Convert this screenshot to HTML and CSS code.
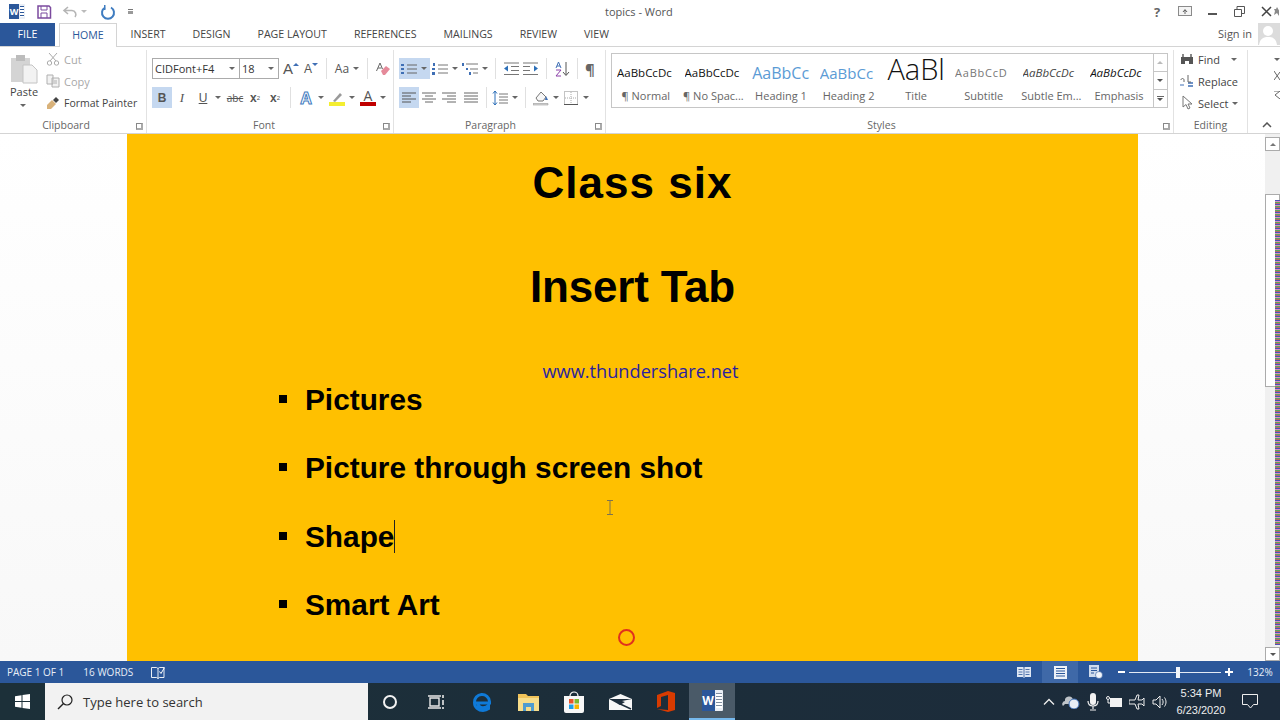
FILE: index.html

```html
<!DOCTYPE html>
<html lang="en">
<head>
    <meta charset="UTF-8">
    <title>topics - Word</title>
    <link rel="stylesheet" href="styles.css">
</head>
<body>
    <div class="app">
        <!-- title bar -->
        <div class="titlebar">
            <div class="qat">
                <span class="word-logo"><b>W</b><i></i></span>
                <svg class="qat-save" width="16" height="16" viewBox="0 0 16 16"><path d="M2 2h11l1.500 1.500V14H2z" fill="none" stroke="#7b4a9e" stroke-width="1.500"/><path d="M5 2v4h6V2M5 14V9h6v5" fill="none" stroke="#7b4a9e"/></svg>
                <svg class="qat-undo" width="16" height="14" viewBox="0 0 16 14"><path d="M6 2 2 5.500 6 9M2 5.500h8a4 4 0 0 1 3 6.500" fill="none" stroke="#b5b5b5" stroke-width="1.600"/></svg>
                <span class="caret caret-pale qat-caret"></span>
                <svg class="qat-redo" width="16" height="16" viewBox="0 0 16 16"><path d="M5 3.500a6 6 0 1 0 6 0" fill="none" stroke="#3f7cc0" stroke-width="2"/><path d="M4 1v5h1.500V1z" fill="#3f7cc0"/></svg>
                <span class="qat-custom"></span>
            </div>
            <div class="doc-title">topics - Word</div>
            <div class="win-btns">
                <span class="help">?</span>
                <svg class="win-opt" width="14" height="11" viewBox="0 0 14 11"><rect x=".5" y=".5" width="13" height="9" fill="#f4f4f4" stroke="#8a8a8a"/><path d="M7 3 4.500 6h5zM6.500 5h1v3h-1z" fill="#666"/></svg>
                <span class="win-min"></span>
                <svg class="win-max" width="11" height="11" viewBox="0 0 11 11"><path d="M.5 3.500h7v7h-7zM3 3.500V.5h7.500v7h-3" fill="none" stroke="#555"/></svg>
                <svg class="win-close" width="11" height="11" viewBox="0 0 11 11"><path d="M1 1l9 9M10 1l-9 9" stroke="#444" stroke-width="1.500"/></svg>
                <svg class="win-pin" width="5" height="9" viewBox="0 0 5 9"><path d="M3 0l2 3.500V9L3 6 0 8l1-4-1-2h2z" fill="#8a8a8a"/></svg>
            </div>
        </div>

        <!-- tabs -->
        <div class="tabs">
            <div class="tab tab-file">FILE</div>
            <div class="tab tab-active">HOME</div>
            <div class="tab">INSERT</div>
            <div class="tab">DESIGN</div>
            <div class="tab">PAGE LAYOUT</div>
            <div class="tab">REFERENCES</div>
            <div class="tab">MAILINGS</div>
            <div class="tab">REVIEW</div>
            <div class="tab">VIEW</div>
            <div class="signin">
                <span>Sign in</span>
                <svg width="22" height="22" viewBox="0 0 22 22"><rect width="22" height="22" fill="#dcdcdc"/><circle cx="10" cy="8" r="5" fill="#fff"/><path d="M1 22c1-7 5-8 9-8s8 1 9 8z" fill="#fff"/></svg>
            </div>
        </div>

        <!-- ribbon -->
        <div class="ribbon">
            <div class="group group-clipboard">
                <div class="group-body clipboard">
                    <div class="paste">
                        <svg width="28" height="30" viewBox="0 0 28 30"><rect x="1" y="4" width="19" height="24" fill="#d4d4d4"/><rect x="6" y="1" width="9" height="6" fill="#bcbcbc"/><path d="M13 11h9l5 5v13H13z" fill="#f2f2f2" stroke="#c4c4c4"/></svg>
                        <span>Paste</span>
                        <span class="caret"></span>
                    </div>
                    <div class="clip-list">
                        <div class="clip-row off">
                            <svg width="14" height="14" viewBox="0 0 14 14"><path d="M3 1l7 8M11 1L4 9" stroke="#aaa" fill="none"/><circle cx="3.500" cy="11" r="2.200" fill="none" stroke="#aaa"/><circle cx="10.500" cy="11" r="2.200" fill="none" stroke="#aaa"/></svg>
                            Cut
                        </div>
                        <div class="clip-row off">
                            <svg width="14" height="14" viewBox="0 0 14 14"><path d="M1 1h6v9H1zM6 4h7v9H6z" fill="#f2f2f2" stroke="#b0b0b0"/><path d="M8 7h3M8 9h3" stroke="#b0b0b0"/></svg>
                            Copy
                        </div>
                        <div class="clip-row painter">
                            <svg width="14" height="14" viewBox="0 0 14 14"><path d="M1 9l5-5 4 4-5 5H1z" fill="#d9b27a"/><path d="M7 4l3-3 3 3-3 3z" fill="#444"/></svg>
                            Format Painter
                        </div>
                    </div>
                </div>
                <div class="group-label">Clipboard<span class="launcher"></span></div>
            </div>

            <div class="group group-font">
                <div class="group-body rows">
                    <div class="row">
                        <div class="combo combo-font">CIDFont+F4<span class="caret"></span></div>
                        <div class="combo combo-size">18<span class="caret"></span></div>
                        <span class="tool gl-a">A<sup class="up"></sup></span>
                        <span class="tool gl-a small">A<sup class="down"></sup></span>
                        <span class="sep"></span>
                        <span class="tool tool-wide gl-aa">Aa<span class="caret"></span></span>
                        <span class="sep"></span>
                        <span class="tool">
                            <svg width="16" height="16" viewBox="0 0 16 16"><path d="M5 2 1.500 10M5 2l2.500 6M3 7h3.500" fill="none" stroke="#666"/><path d="M6 10l5-5 4 3-5 6H8z" fill="#e58a9a"/></svg>
                        </span>
                    </div>
                    <div class="row">
                        <span class="tool active gl-b">B</span>
                        <span class="tool gl-i">I</span>
                        <span class="tool gl-u">U</span><span class="caret caret-tight"></span>
                        <span class="tool gl-abc">abc</span>
                        <span class="tool gl-b">x<sub>2</sub></span>
                        <span class="tool gl-b">x<sup>2</sup></span>
                        <span class="sep"></span>
                        <span class="tool gl-effect">A</span><span class="caret caret-tight"></span>
                        <span class="tool tool-mark">
                            <svg width="16" height="16" viewBox="0 0 16 16"><path d="M4 11l7-8 2 2-7 7z" fill="#9a9a9a"/><rect x="0" y="12" width="16" height="4" fill="#f4ee30"/></svg>
                        </span><span class="caret caret-tight"></span>
                        <span class="tool gl-color">A</span><span class="caret caret-tight"></span>
                    </div>
                </div>
                <div class="group-label">Font<span class="launcher"></span></div>
            </div>

            <div class="group group-para">
                <div class="group-body rows">
                    <div class="row">
                        <span class="tool-split active">
                            <svg width="16" height="14" viewBox="0 0 16 14"><path d="M0 2h3v2H0zM0 6h3v2H0zM0 10h3v2H0z" fill="#3f6fb5"/><path d="M6 3h10M6 7h10M6 11h10" stroke="#666"/></svg>
                            <span class="caret"></span>
                        </span>
                        <span class="tool">
                            <svg width="16" height="14" viewBox="0 0 16 14"><path d="M1 1h2v3H1zM0 6h3v2H0zM0 10h3v3H0z" fill="#3f6fb5"/><path d="M6 3h10M6 7h10M6 11h10" stroke="#777"/></svg>
                        </span><span class="caret caret-tight"></span>
                        <span class="tool">
                            <svg width="16" height="14" viewBox="0 0 16 14"><path d="M0 1h2v3H0zM4 6h2v2H4zM7 10h2v3H7z" fill="#3f6fb5"/><path d="M4 2h12M8 7h8M11 11h5" stroke="#777"/></svg>
                        </span><span class="caret caret-tight"></span>
                        <span class="sep"></span>
                        <span class="tool">
                            <svg width="16" height="14" viewBox="0 0 16 14"><path d="M1 1h15M8 4.500h8M8 8.500h8M1 12.500h15" stroke="#777"/><path d="M1 6.500 5 3.500v6z" fill="#2c6fb8"/></svg>
                        </span>
                        <span class="tool">
                            <svg width="16" height="14" viewBox="0 0 16 14"><path d="M0 1h15M0 4.500h7M0 8.500h7M0 12.500h15" stroke="#777"/><path d="M15 6.500 11 3.500v6z" fill="#2c6fb8"/></svg>
                        </span>
                        <span class="sep"></span>
                        <span class="tool tool-az">
                            <svg width="16" height="16" viewBox="0 0 16 16"><path d="M12 1v13M9 11l3 3.500 3-3.500" fill="none" stroke="#555"/><path d="M2 7l2.500-6L7 7M3 5h3" fill="none" stroke="#3f6fb5"/><path d="M2 9h5l-5 6h5" fill="none" stroke="#8b3fa8"/></svg>
                        </span>
                        <span class="sep"></span>
                        <span class="tool gl-pilcrow">¶</span>
                    </div>
                    <div class="row">
                        <span class="tool active">
                            <svg width="14" height="12" viewBox="0 0 14 12"><path d="M0 1h14M0 4h9M0 7h14M0 10h9" stroke="#555"/></svg>
                        </span>
                        <span class="tool">
                            <svg width="14" height="12" viewBox="0 0 14 12"><path d="M0 1h14M3 4h8M0 7h14M3 10h8" stroke="#666"/></svg>
                        </span>
                        <span class="tool">
                            <svg width="14" height="12" viewBox="0 0 14 12"><path d="M0 1h14M5 4h9M0 7h14M5 10h9" stroke="#666"/></svg>
                        </span>
                        <span class="tool tool-justify">
                            <svg width="14" height="12" viewBox="0 0 14 12"><path d="M0 1h14M0 4h14M0 7h14M0 10h14" stroke="#666"/></svg>
                        </span>
                        <span class="sep"></span>
                        <span class="tool tool-spacing">
                            <svg width="16" height="16" viewBox="0 0 16 16"><path d="M3 1v14M1 3.500 3 1l2 2.500M1 12.500 3 15l2-2.500" fill="none" stroke="#2c6fb8"/><path d="M7 4h9M7 7h9M7 10h9M7 13h9" stroke="#777"/></svg>
                        </span><span class="caret caret-tight"></span>
                        <span class="sep"></span>
                        <span class="tool">
                            <svg width="16" height="16" viewBox="0 0 16 16"><path d="M3 8l5-6 5 5-3 4H5z" fill="#f7f7f7" stroke="#777"/><path d="M13 6l2 4h-3z" fill="#3f6fb5"/><path d="M0 13.500h15V15H0z" fill="#d9d9d9" stroke="#888" stroke-width=".5"/></svg>
                        </span><span class="caret caret-tight"></span>
                        <span class="tool">
                            <svg width="14" height="14" viewBox="0 0 14 14"><rect x=".5" y=".5" width="13" height="13" fill="none" stroke="#888" stroke-dasharray="1 1"/><path d="M7 1v12M1 7h12" stroke="#aaa" stroke-dasharray="1 1"/><path d="M0 13.500h14" stroke="#555"/></svg>
                        </span><span class="caret caret-tight"></span>
                    </div>
                </div>
                <div class="group-label">Paragraph<span class="launcher"></span></div>
            </div>

            <div class="group group-styles">
                <div class="gallery">
                    <div class="style"><div class="preview">AaBbCcDc</div><div class="style-name">¶ Normal</div></div>
                    <div class="style"><div class="preview">AaBbCcDc</div><div class="style-name">¶ No Spac...</div></div>
                    <div class="style"><div class="preview pv-h1">AaBbCc</div><div class="style-name">Heading 1</div></div>
                    <div class="style"><div class="preview pv-h2">AaBbCc</div><div class="style-name">Heading 2</div></div>
                    <div class="style"><div class="preview pv-title">AaBl</div><div class="style-name">Title</div></div>
                    <div class="style"><div class="preview pv-sub">AaBbCcD</div><div class="style-name">Subtitle</div></div>
                    <div class="style"><div class="preview pv-em pv-subtle">AaBbCcDc</div><div class="style-name">Subtle Em...</div></div>
                    <div class="style"><div class="preview pv-em">AaBbCcDc</div><div class="style-name">Emphasis</div></div>
                    <div class="gallery-scroll">
                        <span><i class="tri-up"></i></span>
                        <span><i class="tri-down"></i></span>
                        <span class="more"><i class="tri-down"></i></span>
                    </div>
                </div>
                <div class="group-label">Styles<span class="launcher"></span></div>
            </div>

            <div class="group group-edit">
                <div class="group-body edit-list">
                    <div class="edit-row">
                        <svg width="14" height="14" viewBox="0 0 14 14"><path d="M1 5h4v7H1zM9 5h4v7H9zM5 5h4v4H5z" fill="#555"/><path d="M2 2h2v3H2zM10 2h2v3h-2z" fill="#888"/></svg>
                        Find<span class="caret caret-find"></span>
                    </div>
                    <div class="edit-row">
                        <svg width="14" height="14" viewBox="0 0 14 14"><path d="M0 11h4" stroke="#3f6fb5"/><path d="M8 9h5M8 12h5" stroke="#3f6fb5" stroke-width="1.500"/><path d="M1 6c0-2 3-2 3 0v2M8 1v7h3" fill="none" stroke="#666"/></svg>
                        Replace
                    </div>
                    <div class="edit-row">
                        <svg width="14" height="16" viewBox="0 0 14 16"><path d="M3 1v11l3-2.500 2 4.500 2-1-2-4h4z" fill="#fff" stroke="#777"/></svg>
                        Select<span class="caret"></span>
                    </div>
                </div>
                <div class="group-label">Editing</div>
            </div>

            <div class="group group-extra">
                <div class="extra-bits">
                    <span class="caret"></span>
                    <svg width="6" height="12" viewBox="0 0 6 12"><path d="M0 1l6 9M0 10l6-8" stroke="#666" fill="none"/></svg>
                    <svg width="6" height="8" viewBox="0 0 6 8"><path d="M0 0h6L1 4l5 4" stroke="#666" fill="none"/></svg>
                </div>
                <svg class="collapse" width="10" height="6" viewBox="0 0 10 6"><path d="M1 5l4-4 4 4" fill="none" stroke="#555" stroke-width="1.500"/></svg>
            </div>
        </div>

        <!-- document area -->
        <div class="workspace">
            <div class="gutter"></div>
            <div class="page">
                <h1 class="spaced">Class six</h1>
                <h1 class="tight">Insert Tab</h1>
                <div class="url">www.thundershare.net</div>
                <ul class="topics">
                    <li>Pictures</li>
                    <li>Picture through screen shot</li>
                    <li><span class="typing">Shape</span></li>
                    <li>Smart Art</li>
                </ul>
                <svg class="ibeam" width="8" height="15" viewBox="0 0 8 15"><path d="M1 .5h6M1 14.500h6M4 1v13" stroke="#7d7350" fill="none"/></svg>
                <span class="click-ring"></span>
            </div>
            <div class="gutter gutter-right"></div>
            <div class="vscroll">
                <span class="vs-btn"><i class="tri-up"></i></span>
                <div class="vs-track"><div class="vs-thumb"></div></div>
                <span class="vs-btn"><i class="tri-down"></i></span>
                <div class="vs-noise"></div>
            </div>
        </div>

        <!-- status bar -->
        <div class="statusbar">
            <span class="st-text st-page">PAGE 1 OF 1</span>
            <span class="st-text st-words">16 WORDS</span>
            <svg class="st-proof" width="14" height="13" viewBox="0 0 14 13"><path d="M.5 1.500h5l1.500 1v10l-1.500-1h-5zM7 2.500l1.500-1H13v10H8.500l-1.500 1" fill="none" stroke="#fff" stroke-width=".9"/><path d="M8.500 5.500l1.500 2 3.500-6" fill="none" stroke="#fff"/></svg>
            <div class="st-right">
                <span class="view">
                    <svg width="14" height="12" viewBox="0 0 14 12"><path d="M0 1h6l1 1 1-1h6v10H8l-1 1-1-1H0z" fill="#dfe7f3"/><path d="M7 2v9M1.500 3.500h4M1.500 6h4M1.500 8.500h4M8.500 3.500h4M8.500 6h4M8.500 8.500h4" stroke="#2b579a" stroke-width=".8"/></svg>
                </span>
                <span class="view view-active">
                    <svg width="13" height="13" viewBox="0 0 13 13"><rect width="13" height="13" fill="#eef2f8"/><path d="M2 2.500h9M2 5h9M2 7.500h9M2 10h9" stroke="#2b579a"/></svg>
                </span>
                <span class="view">
                    <svg width="14" height="14" viewBox="0 0 14 14"><rect x="0" y="0" width="10" height="12" fill="#cfdbec"/><path d="M2 3h6M2 5.500h6M2 8h3" stroke="#2b579a"/><circle cx="10" cy="10" r="3.500" fill="#f2f5fa" stroke="#2b579a" stroke-width=".6"/></svg>
                </span>
                <div class="zoom">
                    <span class="zoom-minus"></span>
                    <div class="zoom-track"><span class="zoom-thumb"></span></div>
                    <span class="zoom-plus"></span>
                </div>
                <span class="st-text st-zoom">132%</span>
            </div>
        </div>

        <!-- taskbar -->
        <div class="taskbar">
            <div class="start">
                <svg width="15" height="15" viewBox="0 0 15 15"><path d="M0 2.200 6.500 1.200V7H0zM7.500 1l7.500-1v7H7.500zM0 8h6.500v5.800L0 12.800zM7.500 8H15v7l-7.500-1z" fill="#fff"/></svg>
            </div>
            <div class="search">
                <svg width="16" height="16" viewBox="0 0 16 16"><circle cx="10" cy="6" r="5" fill="none" stroke="#222" stroke-width="1.200"/><path d="M6.500 9.500 1 15" stroke="#222" stroke-width="1.400"/></svg>
                <span>Type here to search</span>
            </div>
            <div class="task-icons">
                <span class="task"><i class="cortana"></i></span>
                <span class="task">
                    <svg width="18" height="14" viewBox="0 0 18 14"><path d="M3 3h9v8H3zM1 1h13M1 13h13" fill="none" stroke="#e8e8e8" stroke-width="1.400"/><path d="M16 0v3M16 5v5M16 12v2" stroke="#e8e8e8" stroke-width="1.600"/></svg>
                </span>
                <span class="task">
                    <svg width="20" height="20" viewBox="0 0 20 20"><path d="M2.500 11h15V9.500a7.500 7.500 0 0 0-15 1c0 5 4 8 8.500 8 2 0 4-.6 5.500-1.800v-3c-1.500 1.300-3.500 2-5.500 2-2.500 0-4.500-1.200-5-3.700" fill="none" stroke="#0f7ad8" stroke-width="3"/></svg>
                </span>
                <span class="task">
                    <svg width="21" height="18" viewBox="0 0 21 18"><path d="M0 1h8l2 2h11v15H0z" fill="#f0c35a"/><path d="M0 5h21v13H0z" fill="#f7dd8a"/><path d="M5 10h11v8h-3v-4H8v4H5z" fill="#4f9ccf"/></svg>
                </span>
                <span class="task">
                    <svg width="22" height="23" viewBox="0 0 22 23"><path d="M7 6a4 4 0 0 1 8 0" fill="none" stroke="#fff" stroke-width="1.200"/><path d="M1 6h20v15a2 2 0 0 1-2 2H3a2 2 0 0 1-2-2z" fill="#f7f7f7"/><rect x="6" y="9" width="4.500" height="4.500" fill="#e8532b"/><rect x="11.500" y="9" width="4.500" height="4.500" fill="#7cb82f"/><rect x="6" y="14.500" width="4.500" height="4.500" fill="#1d9fe8"/><rect x="11.500" y="14.500" width="4.500" height="4.500" fill="#f7b500"/></svg>
                </span>
                <span class="task">
                    <svg width="23" height="16" viewBox="0 0 23 16"><path d="M0 5 11.500 0 23 5v11H0z" fill="#f7f7f7"/><path d="M0 5l11 6 5-3-3-1 10-2" fill="#1d2d3b"/><path d="M9 9l13 6" stroke="#1d2d3b" stroke-width="1.400"/></svg>
                </span>
                <span class="task">
                    <svg width="18" height="21" viewBox="0 0 18 21"><path d="M0 4 11 0l7 2v17l-7 2-11-3 11 1V4l-7 2v9l-4 2z" fill="#d83b01"/></svg>
                </span>
                <span class="task task-active"><span class="word-logo big"><b>W</b><i></i></span></span>
            </div>
            <div class="tray">
                <svg class="tray-chev" width="12" height="7" viewBox="0 0 12 7"><path d="M1 6.500l5-5 5 5" fill="none" stroke="#eee" stroke-width="1.300"/></svg>
                <svg width="18" height="14" viewBox="0 0 18 14"><path d="M1 11a3 3 0 0 1 2-5 4 4 0 0 1 8-1 3 3 0 0 1 3 4H3z" fill="#bfc4c9"/><circle cx="12" cy="9" r="5" fill="#e8eef5" stroke="#3f6fb5"/></svg>
                <svg width="12" height="18" viewBox="0 0 12 18"><rect x="3" y="0" width="6" height="12" rx="3" fill="#f2f2f2"/><path d="M1 8c0 4 2 5 5 5s5-1 5-5M6 13v3M3 17h6" fill="none" stroke="#f2f2f2" stroke-width="1.200"/></svg>
                <svg width="16" height="12" viewBox="0 0 16 12"><rect x="4" y="2" width="12" height="9" fill="#f2f2f2"/><circle cx="2" cy="2" r="1.500" fill="none" stroke="#f2f2f2"/><path d="M2 4v3h2" stroke="#f2f2f2" fill="none"/></svg>
                <svg width="16" height="16" viewBox="0 0 16 16"><path d="M0 6h6L8 1h2L9 6h4l2-2v8l-2-2H9l1 5H8L6 10H0z" fill="none" stroke="#eee"/></svg>
                <svg width="16" height="14" viewBox="0 0 16 14"><path d="M1 5h3l4-4v12L4 9H1z" fill="none" stroke="#eee"/><path d="M10 4c1.500 2 1.500 4 0 6M12.500 2.500c2 3 2 6 0 9" fill="none" stroke="#eee"/></svg>
                <div class="clock"><div>5:34 PM</div><div>6/23/2020</div></div>
                <svg class="notify" width="16" height="15" viewBox="0 0 16 15"><path d="M.5.500h15v10h-4l-3 3.500-3-3.500h-5z" fill="none" stroke="#eee"/></svg>
            </div>
        </div>
    </div>
</body>
</html>
```

FILE: styles.css

```css
* {
    margin: 0;
    padding: 0;
    box-sizing: border-box;
}

body {
    width: 1280px;
    height: 720px;
    overflow: hidden;
    font-family: 'Open Sans', 'Noto Sans', sans-serif;
    font-size: 11px;
    color: #444;
    background: #fff;
}

.app {
    height: 720px;
    display: flex;
    flex-direction: column;
}

svg {
    flex: none;
    display: block;
}

/* small dropdown arrow used everywhere */
.caret {
    display: inline-block;
    flex: none;
    width: 0;
    height: 0;
    border-left: 3px solid transparent;
    border-right: 3px solid transparent;
    border-top: 3px solid #666;
}

.caret-pale {
    border-top-color: #bbb;
}

.caret-tight {
    margin: 0 2px;
}

.word-logo {
    display: flex;
    align-items: center;
    width: 16px;
    height: 15px;
    background: #e9eef5;
    border-radius: 1px;
}

.word-logo b {
    width: 10px;
    height: 15px;
    background: #2b579a;
    color: #fff;
    font-size: 9px;
    line-height: 15px;
    text-align: center;
    font-weight: 700;
}

.word-logo i {
    flex: 1;
    height: 11px;
    margin: 0 1px;
    background: repeating-linear-gradient(#2b579a 0 1px, #fff 1px 3px);
}

.word-logo.big {
    width: 21px;
    height: 21px;
}

.word-logo.big b {
    width: 13px;
    height: 21px;
    font-size: 12px;
    line-height: 21px;
}

.word-logo.big i {
    height: 15px;
    background: repeating-linear-gradient(#7f8da0 0 1px, #fff 1px 3px);
}

/* title bar */
.titlebar {
    height: 23px;
    display: flex;
    align-items: center;
    flex: none;
}

.qat {
    width: 140px;
    height: 23px;
    padding-left: 9px;
    display: flex;
    align-items: center;
}

.qat-save {
    margin-left: 11px;
}

.qat-undo {
    margin-left: 10px;
}

.qat-caret {
    margin-left: 3px;
}

.qat-redo {
    margin-left: 13px;
}

.qat-custom {
    width: 5px;
    height: 5px;
    margin-left: 12px;
    border-top: 1px solid #777;
    border-bottom: 3px solid #999;
}

.doc-title {
    flex: 1;
    padding-left: 465px;
    font-size: 11px;
    color: #555;
}

.win-btns {
    width: 134px;
    display: flex;
    align-items: center;
    padding-left: 4px;
}

.help {
    width: 14px;
    font-weight: 700;
    font-size: 13px;
    color: #666;
    text-align: center;
}

.win-opt {
    margin-left: 14px;
}

.win-min {
    width: 9px;
    height: 2px;
    margin: 4px 0 0 16px;
    background: #555;
}

.win-max {
    margin-left: 17px;
}

.win-close {
    margin-left: 16px;
}

.win-pin {
    margin-left: 2px;
}

/* tabs */
.tabs {
    height: 24px;
    flex: none;
    display: flex;
    border-bottom: 1px solid #d4d4d4;
}

.tab {
    padding: 4px 13.500px 0;
    font-size: 10.600px;
    color: #444;
    white-space: nowrap;
}

.tab-file {
    width: 55px;
    margin-right: 4px;
    padding: 4px 0 0;
    text-align: center;
    background: #2b579a;
    color: #fff;
}

.tab-active {
    width: 58px;
    padding: 4px 0 0;
    margin-bottom: -1px;
    text-align: center;
    color: #2b579a;
    background: #fff;
    border: 1px solid #d4d4d4;
    border-bottom: none;
}

.signin {
    margin-left: auto;
    display: flex;
    align-items: flex-start;
    gap: 6px;
    font-size: 11px;
    color: #555;
}

.signin span {
    padding-top: 3px;
}

/* ribbon */
.ribbon {
    height: 87px;
    flex: none;
    display: flex;
    border-bottom: 1px solid #d4d4d4;
    padding-top: 3px;
}

.group {
    display: flex;
    flex-direction: column;
    border-right: 1px solid #e2e2e2;
    flex: none;
}

.group-body {
    flex: 1;
}

.group-label {
    height: 15px;
    font-size: 10.500px;
    line-height: 15px;
    color: #666;
    text-align: center;
    position: relative;
}

.launcher {
    position: absolute;
    right: 3px;
    top: 5px;
    width: 7px;
    height: 7px;
    border-left: 1px solid #888;
    border-top: 1px solid #888;
    border-bottom: 2px solid #aaa;
    border-right: 2px solid #aaa;
}

.group-clipboard {
    width: 147px;
}

.group-clipboard .group-label {
    padding-right: 14px;
}

.group-font {
    width: 247px;
}

.group-font .group-label {
    padding-right: 12px;
}

.group-para {
    width: 212px;
}

.group-para .group-label {
    padding-right: 18px;
}

.group-styles {
    width: 568px;
}

.group-styles .group-label {
    padding-right: 16px;
}

.group-edit {
    width: 74px;
}

.group-extra {
    flex: 1;
    border-right: none;
}

/* clipboard */
.clipboard {
    display: flex;
}

.paste {
    width: 46px;
    padding: 4px 0 0 10px;
    display: flex;
    flex-direction: column;
    font-size: 11px;
    color: #444;
}

.paste span:nth-child(2) {
    margin-top: 0;
}

.paste .caret {
    margin: 5px 0 0 10px;
}

.clip-list {
    margin-top: -1px;
    display: flex;
    flex-direction: column;
    gap: 2px;
}

.clip-row {
    height: 20px;
    display: flex;
    align-items: center;
    gap: 4px;
    font-size: 11px;
    color: #444;
}

.clip-row.off {
    color: #a8a8a8;
}

.clip-row.painter {
    font-size: 10.500px;
}

/* font + paragraph rows */
.rows {
    padding: 8px 0 0 5px;
    display: flex;
    flex-direction: column;
    gap: 8px;
}

.row {
    height: 21px;
    display: flex;
    align-items: center;
}

.combo {
    height: 21px;
    display: flex;
    align-items: center;
    justify-content: space-between;
    padding: 0 4px 0 2px;
    border: 1px solid #ababab;
    font-size: 11px;
    color: #333;
    background: #fff;
}

.combo-font {
    width: 88px;
}

.combo-size {
    width: 40px;
    margin-left: -1px;
    margin-right: 2px;
}

.tool {
    width: 20px;
    height: 21px;
    display: flex;
    align-items: center;
    justify-content: center;
    flex: none;
    color: #555;
    font-size: 12px;
}

.tool-wide {
    width: 30px;
    gap: 4px;
    font-size: 12px;
}

.tool-split {
    width: 31px;
    height: 21px;
    display: flex;
    align-items: center;
    gap: 4px;
    padding-left: 2px;
}

.active {
    background: #c5d8f0;
}

.sep {
    width: 1px;
    height: 21px;
    margin: 0 5px;
    flex: none;
    background: #e0e0e0;
}

.gl-a {
    font-size: 15px;
    font-family: 'Liberation Sans', sans-serif;
}

.gl-a.small {
    font-size: 12px;
}

.gl-a sup {
    width: 0;
    height: 0;
    margin-bottom: 8px;
    border-left: 3px solid transparent;
    border-right: 3px solid transparent;
}

.gl-a .up {
    border-bottom: 3px solid #3f6fb5;
}

.gl-a .down {
    border-top: 3px solid #3f6fb5;
}

.gl-b {
    font-family: 'Liberation Sans', sans-serif;
    font-weight: 700;
}

.gl-b sub, .gl-b sup {
    font-size: 6px;
    font-weight: 400;
}

.gl-i {
    font-family: 'Liberation Serif', serif;
    font-style: italic;
    font-size: 13px;
}

.gl-u {
    margin-left: 1px;
    font-family: 'Liberation Sans', sans-serif;
    text-decoration: underline;
}

.gl-abc {
    margin-left: 2px;
    font-size: 10px;
    text-decoration: line-through;
}

.gl-effect {
    font-size: 16px;
    font-weight: 700;
    color: #fff;
    -webkit-text-stroke: 1px #3f7cc0;
}

.tool-mark {
    margin-left: 1px;
}

.gl-color {
    width: 16px;
    height: 17px;
    margin: 0 2px 0 3px;
    font-size: 14px;
    line-height: 14px;
    border-bottom: 4px solid #c00000;
}

.gl-pilcrow {
    margin-left: -3px;
    font-size: 15px;
    font-weight: 700;
    color: #666;
}

.tool-justify {
    margin-left: 2px;
}

.tool-spacing {
    margin-left: -2px;
}

/* styles gallery */
.gallery {
    flex: 1;
    margin: 3px 5px 10px 5px;
    display: flex;
    border: 1px solid #c6c6c6;
    background: #fff;
}

.style {
    width: 67.600px;
    flex: none;
    overflow: hidden;
    text-align: center;
}

.preview {
    height: 36px;
    margin: 0 5px;
    padding-top: 2px;
    line-height: 34px;
    text-align: left;
    white-space: nowrap;
    overflow: hidden;
    font-size: 11.500px;
    color: #111;
}

.pv-h1 {
    font-size: 16px;
    color: #5b9bd5;
}

.pv-h2 {
    font-size: 15px;
    color: #5b9bd5;
}

.pv-title {
    padding-top: 0;
    font-size: 29px;
    font-weight: 300;
    line-height: 30px;
    color: #111;
}

.pv-sub {
    font-size: 11px;
    letter-spacing: .8px;
    color: #777;
}

.pv-em {
    font-style: italic;
}

.pv-subtle {
    color: #444;
}

.style-name {
    font-size: 11px;
    line-height: 12px;
    color: #666;
    white-space: nowrap;
}

.gallery-scroll {
    margin-left: auto;
    width: 15px;
    display: flex;
    flex-direction: column;
    border-left: 1px solid #c6c6c6;
}

.gallery-scroll span {
    flex: 1;
    display: flex;
    flex-direction: column;
    align-items: center;
    justify-content: center;
    border-bottom: 1px solid #c6c6c6;
}

.gallery-scroll span:last-child {
    border-bottom: none;
}

.gallery-scroll .more::before {
    content: '';
    width: 7px;
    height: 1px;
    margin-bottom: 1px;
    background: #666;
}

.tri-up, .tri-down {
    display: block;
    width: 0;
    height: 0;
    border-left: 3px solid transparent;
    border-right: 3px solid transparent;
}

.tri-up {
    border-bottom: 3px solid #777;
}

.tri-down {
    border-top: 3px solid #555;
}

.gallery-scroll .tri-up {
    border-bottom-color: #bbb;
}

/* editing */
.edit-list {
    margin-top: -1px;
    padding-left: 6px;
    display: flex;
    flex-direction: column;
    gap: 2px;
}

.edit-row {
    height: 20px;
    display: flex;
    align-items: center;
    gap: 4px;
    font-size: 11px;
    color: #444;
}

.caret-find {
    margin-left: 7px;
}

.extra-bits {
    flex: 1;
    width: 6px;
    align-self: flex-end;
    padding-top: 8px;
    display: flex;
    flex-direction: column;
    align-items: center;
    gap: 9px;
}

.collapse {
    margin: 0 0 5px 14px;
}

/* document */
.workspace {
    height: 527px;
    flex: none;
    display: flex;
    position: relative;
    overflow: hidden;
}

.gutter {
    width: 127px;
    flex: none;
    background: linear-gradient(#fff, #f8f8f8);
}

.page {
    width: 1011px;
    flex: none;
    position: relative;
    overflow: hidden;
    padding-top: 22px;
    background: #ffc000;
    color: #000;
    font-family: 'Liberation Sans', Arial, sans-serif;
}

.page h1 {
    height: 54px;
    margin-bottom: 50px;
    font-size: 44px;
    line-height: 54px;
    text-align: center;
    font-weight: 700;
}

.page h1.spaced {
    letter-spacing: 1px;
}

.page h1.tight {
    letter-spacing: -.2px;
}

.url {
    margin-top: -4px;
    padding-left: 16px;
    height: 22px;
    font-family: 'Open Sans', sans-serif;
    font-size: 18.200px;
    line-height: 22px;
    text-align: center;
    color: #2a1fa0;
}

.topics {
    margin-top: 1px;
    padding-left: 178px;
    list-style: none;
}

.topics li {
    position: relative;
    height: 34px;
    margin-bottom: 34.400px;
    font-size: 29.800px;
    line-height: 34px;
    font-weight: 700;
}

.topics li::before {
    content: '';
    position: absolute;
    left: -26px;
    top: 12px;
    width: 8px;
    height: 8px;
    background: #000;
}

.typing {
    border-right: 1px solid #222;
}

.ibeam {
    position: absolute;
    left: 479px;
    top: 366px;
}

.click-ring {
    position: absolute;
    left: 491px;
    top: 495px;
    width: 17px;
    height: 17px;
    border: 2px solid #e0301e;
    border-radius: 50%;
}

.vscroll {
    flex: 1;
    display: flex;
    flex-direction: column;
    padding-top: 3px;
    background: #f0f0f0;
    position: relative;
}

.vs-btn {
    height: 14px;
    flex: none;
    display: flex;
    align-items: center;
    justify-content: center;
    background: #fff;
    border: 1px solid #ababab;
}

.vs-track {
    flex: 1;
    padding-top: 43px;
}

.vs-thumb {
    height: 193px;
    background: #fff;
    border: 1px solid #ababab;
}

.vs-noise {
    position: absolute;
    right: 0;
    top: 66px;
    bottom: 16px;
    width: 5px;
    background: repeating-linear-gradient(#4a55b8 0 1px, #d88fc0 1px 2px, #5aa85a 2px 3px, #b56a6a 3px 4px);
}

/* status bar */
.statusbar {
    height: 22px;
    flex: none;
    display: flex;
    align-items: center;
    background: #2b579a;
    color: #e8eef7;
}

.st-text {
    font-size: 10px;
}

.st-page {
    margin-left: 7px;
}

.st-words {
    margin-left: 19px;
}

.st-proof {
    margin-left: 18px;
}

.st-right {
    margin-left: auto;
    height: 22px;
    display: flex;
    align-items: center;
}

.view {
    width: 36px;
    height: 22px;
    display: flex;
    align-items: center;
    justify-content: center;
}

.view-active {
    background: #3f69a8;
}

.zoom {
    width: 115px;
    margin-left: 4px;
    display: flex;
    align-items: center;
    gap: 4px;
}

.zoom-minus {
    width: 7px;
    height: 2px;
    background: #fff;
}

.zoom-track {
    flex: 1;
    height: 1px;
    background: #e4eaf4;
    position: relative;
}

.zoom-thumb {
    position: absolute;
    left: 47px;
    top: -5px;
    width: 4px;
    height: 11px;
    background: #f2f5fa;
}

.zoom-plus {
    width: 8px;
    height: 8px;
    background: linear-gradient(#fff, #fff) center / 8px 2px no-repeat, linear-gradient(#fff, #fff) center / 2px 8px no-repeat;
}

.st-zoom {
    width: 32px;
    margin: 0 4px 0 11px;
    text-align: center;
}

/* taskbar */
.taskbar {
    height: 37px;
    flex: none;
    display: flex;
    align-items: stretch;
    background: linear-gradient(90deg, #1c3039, #1c2b3b);
}

.start {
    width: 45px;
    display: flex;
    align-items: center;
    justify-content: center;
}

.search {
    width: 323px;
    display: flex;
    align-items: center;
    gap: 10px;
    padding-left: 12px;
    background: #f2f2f2;
    font-size: 13px;
    color: #333;
}

.task-icons {
    display: flex;
    margin-left: -1px;
}

.task {
    width: 46px;
    display: flex;
    align-items: center;
    justify-content: center;
}

.cortana {
    width: 14px;
    height: 14px;
    border: 2px solid #f2f2f2;
    border-radius: 50%;
}

.task-active {
    background: #4a5a68;
    border-bottom: 2px solid #76b9ed;
}

.tray {
    flex: 1;
    display: flex;
    align-items: center;
    justify-content: flex-end;
    gap: 7px;
    color: #eee;
}

.clock {
    width: 62px;
    margin-left: -5px;
    font-family: 'Liberation Sans', sans-serif;
    font-size: 11px;
    line-height: 17px;
    text-align: center;
}

.notify {
    margin: 0 22px 0 3px;
}
```
